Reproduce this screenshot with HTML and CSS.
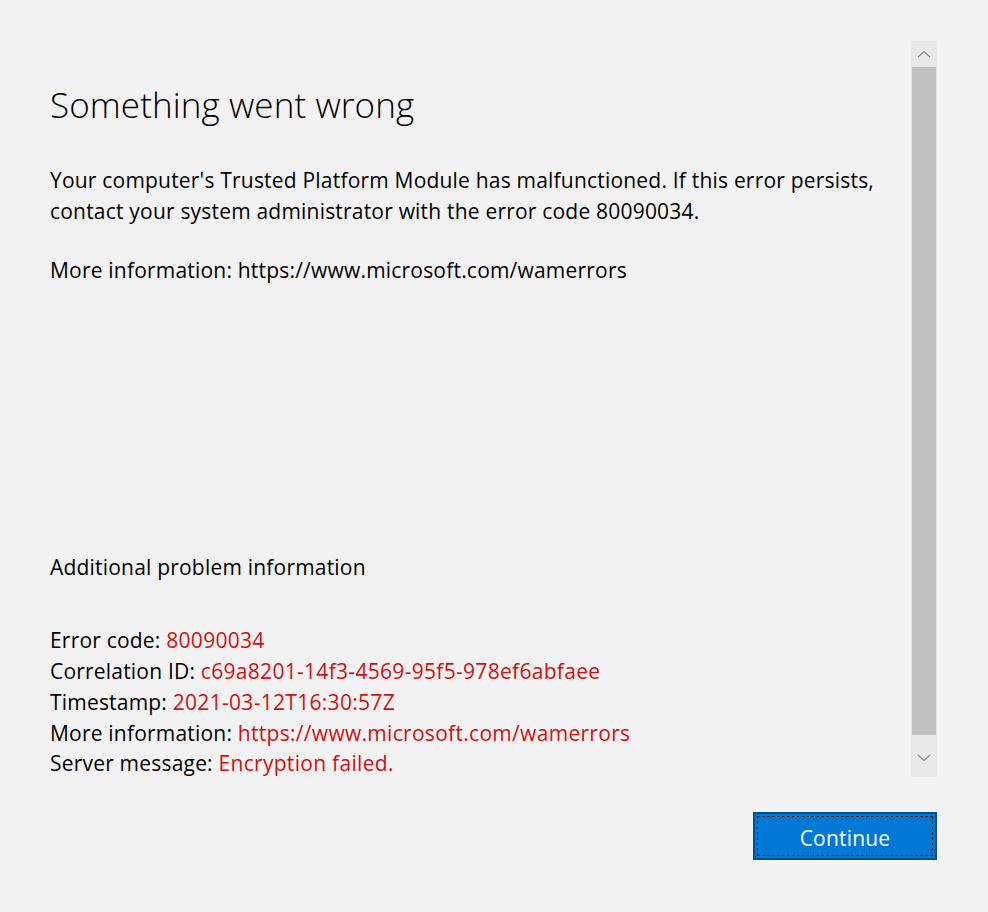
FILE: index.html
```html
<!DOCTYPE html>
<html lang="en">
<head>
<meta charset="utf-8">
<title>Something went wrong</title>
<link rel="stylesheet" href="styles.css">
</head>
<body>
<div class="window">
  <div class="main">
    <div class="content">
      <h1 class="title">Something went wrong</h1>
      <p class="message">Your computer's Trusted Platform Module has malfunctioned. If this error persists, contact your system administrator with the error code 80090034.</p>
      <p class="more">More information: https://www.microsoft.com/wamerrors</p>
      <div class="details">
        <p class="details-title">Additional problem information</p>
        <ul class="detail-list">
          <li>Error code: <span class="val">80090034</span></li>
          <li>Correlation ID: <span class="val">c69a8201-14f3-4569-95f5-978ef6abfaee</span></li>
          <li>Timestamp: <span class="val">2021-03-12T16:30:57Z</span></li>
          <li>More information: <span class="val">https://www.microsoft.com/wamerrors</span></li>
          <li>Server message: <span class="val">Encryption failed.</span></li>
        </ul>
      </div>
    </div>
    <div class="scrollbar">
      <div class="arrow">
        <svg width="14" height="8" viewBox="0 0 14 8"><path d="M1 7 L7 1.5 L13 7" fill="none" stroke="#858585" stroke-width="1.2"/></svg>
      </div>
      <div class="thumb"></div>
      <div class="arrow arrow-down">
        <svg width="14" height="8" viewBox="0 0 14 8"><path d="M1 1 L7 6.5 L13 1" fill="none" stroke="#858585" stroke-width="1.2"/></svg>
      </div>
    </div>
  </div>
  <div class="footer">
    <button class="btn" type="button"><span class="focus">Continue</span></button>
  </div>
</div>
</body>
</html>
```
FILE: styles.css
```css
html, body {
  margin: 0;
  padding: 0;
  background: #f2f2f2;
}
body {
  font-family: "Open Sans", "Noto Sans", sans-serif;
  color: #000;
}
.window {
  width: 988px;
  height: 912px;
  box-sizing: border-box;
  padding: 41px 51px 0 50px;
  display: flex;
  flex-direction: column;
}
.main {
  display: flex;
  height: 736px;
}
.content {
  flex: 1;
  display: flex;
  flex-direction: column;
  padding-top: 42px;
  padding-right: 20px;
}
.title {
  margin: 0;
  font-weight: 300;
  font-size: 35px;
  line-height: 44px;
  letter-spacing: 0.1px;
}
.message,
.more,
.details-title,
.detail-list {
  font-size: 21px;
  letter-spacing: 0.2px;
}
.message {
  margin: 38px 0 0 0;
  line-height: 31px;
}
.more {
  margin: 28px 0 0 0;
  line-height: 31px;
}
.details {
  margin-top: auto;
  margin-bottom: -2px;
}
.details-title {
  margin: 0 0 42px 0;
  line-height: 31px;
}
.detail-list {
  list-style: none;
  margin: 0;
  padding: 0;
  line-height: 30.75px;
}
.val {
  color: #d01111;
  letter-spacing: 0.3px;
}
.scrollbar {
  width: 26px;
  background: #e8e8e8;
  display: flex;
  flex-direction: column;
}
.arrow {
  height: 26px;
  display: flex;
  align-items: center;
  justify-content: center;
}
.arrow-down {
  height: 42px;
  padding-top: 4px;
  box-sizing: border-box;
}
.thumb {
  flex: 1;
  margin: 0 1px;
  background: #c1c1c1;
}
.footer {
  display: flex;
  justify-content: flex-end;
  padding-top: 35px;
}
.btn {
  width: 184px;
  height: 48px;
  box-sizing: border-box;
  border: 2px solid #00508f;
  background: #0078d7;
  padding: 2px;
  margin: 0;
  font-family: inherit;
  cursor: pointer;
  display: flex;
}
.focus {
  flex: 1;
  display: flex;
  align-items: center;
  justify-content: center;
  padding-top: 3px;
  border: 1px dashed #ffffff;
  outline: 1px dashed #1a1a1a;
  outline-offset: -1px;
  color: #ffffff;
  font-size: 21px;
  letter-spacing: 0.2px;
}
```
